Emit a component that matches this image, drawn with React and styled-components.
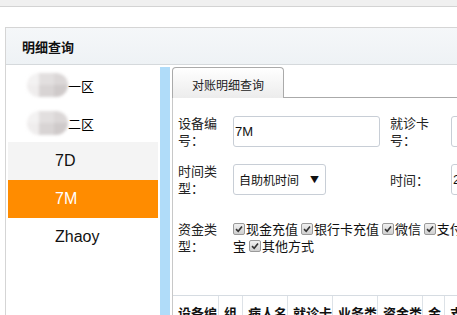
import React from 'react';
import styled, { createGlobalStyle } from 'styled-components';

const GlobalStyle = createGlobalStyle`
  html, body {
    margin: 0;
    padding: 0;
    background: #fff;
    overflow: hidden;
  }
  body {
    font-family: "Liberation Sans", "Noto Sans CJK SC", sans-serif;
    color: #222;
  }
`;

const TopStrip = styled.div`
  height: 6px;
  background: #f0f0f0;
  border-bottom: 1px solid #d3d3d3;
`;

const Panel = styled.div`
  margin: 20px 0 0 5px;
  width: 900px;
  border: 1px solid #d5d5d5;
`;

const PanelHeader = styled.div`
  height: 36px;
  line-height: 37px;
  padding-left: 16px;
  background: linear-gradient(#f5f7f9, #eef2f5);
  border-bottom: 1px solid #d5d9dc;
  font-family: "Noto Sans CJK SC", sans-serif;
  font-size: 13px;
  font-weight: bold;
  color: #111;
`;

const Body = styled.div`
  display: flex;
  align-items: stretch;
  height: 300px;
`;

const Sidebar = styled.div`
  width: 150px;
  padding: 1px 0 0 2px;
`;

const Item = styled.div`
  height: 38px;
  display: flex;
  align-items: center;
  padding-left: ${({ indent }) => indent}px;
  font-size: 16px;
  color: ${({ active }) => (active ? '#fff' : '#111')};
  background: ${({ active, hover }) => (active ? '#ff8c00' : hover ? '#f4f4f4' : 'transparent')};
`;

const Blob = styled.span`
  display: inline-block;
  width: 41px;
  height: 24px;
  border-radius: 12px;
  background:
    linear-gradient(180deg, rgba(255, 255, 255, 0.25) 0 50%, rgba(0, 0, 0, 0) 50%),
    linear-gradient(90deg, #efeded 0 30%, #d8d4d4 30% 65%, #cfcaca 65% 100%);
  filter: blur(1.5px);
`;

const ZoneName = styled.span`
  font-family: "Noto Sans CJK SC", sans-serif;
  font-size: 13px;
  color: #000;
`;

const BlueBar = styled.div`
  width: 10px;
  margin: 2px 0 0 2px;
  background: #b0dcf9;
`;

const Content = styled.div`
  flex: 1;
  margin: 2px 0 0 2px;
  display: flex;
  flex-direction: column;
`;

const TabBar = styled.div`
  display: flex;
  height: 31px;
`;

const Tab = styled.div`
  width: 110px;
  height: 30px;
  border: 1px solid #aaa;
  border-bottom: none;
  border-radius: 4px 4px 0 0;
  background: linear-gradient(#ffffff, #ececec);
  font-family: "Noto Sans CJK SC", sans-serif;
  font-size: 12px;
  line-height: 33px;
  text-align: center;
  color: #222;
`;

const TabRest = styled.div`
  flex: 1;
  border-bottom: 1px solid #aaa;
`;

const Pane = styled.div`
  flex: 1;
  border-left: 1px solid #c8c8c8;
  padding: 16px 0 0 5px;
`;

const FormGrid = styled.div`
  display: grid;
  grid-template-columns: 55px 157px 61px 200px;
  row-gap: 14px;
  align-items: center;
`;

const Label = styled.div`
  padding-right: ${({ wide }) => (wide ? 16 : 10)}px;
  font-family: "Noto Sans CJK SC", sans-serif;
  font-size: 13px;
  line-height: 17px;
  color: #222;
`;

const Input = styled.div`
  box-sizing: border-box;
  width: ${({ w }) => w}px;
  height: 31px;
  border: 1px solid #c8ced6;
  border-radius: 3px;
  padding-left: 1px;
  font-size: 13px;
  line-height: 29px;
  color: #111;
  white-space: nowrap;
  overflow: hidden;
`;

const Select = styled.div`
  box-sizing: border-box;
  width: 93px;
  height: 31px;
  border: 1px solid #c8ced6;
  border-radius: 3px;
  padding: 0 6px 0 5px;
  display: flex;
  align-items: center;
  justify-content: space-between;
  font-family: "Noto Sans CJK SC", sans-serif;
  font-size: 12px;
  color: #111;
`;

const Arrow = styled.span`
  font-size: 9px;
  color: #111;
`;

const CheckGroup = styled.div`
  grid-column: 2 / 5;
  width: 240px;
  margin-top: 10px;
  font-family: "Noto Sans CJK SC", sans-serif;
  font-size: 13px;
  line-height: 17px;
  color: #111;
`;

const FundLabel = styled(Label)`
  margin-top: 10px;
`;

const Box = styled.span`
  display: inline-block;
  box-sizing: border-box;
  width: 12px;
  height: 12px;
  margin-right: 1px;
  vertical-align: -1px;
  border: 1px solid #9a9a9a;
  border-radius: 2px;
  background: linear-gradient(#f0f0f0, #d0d0d0);
  position: relative;
  svg {
    position: absolute;
    left: 1px;
    top: 1px;
  }
`;

const Check = () => (
  <Box>
    <svg width="8" height="8" viewBox="0 0 8 8">
      <path d="M1 4.2 L3.2 6.3 L7 1.5" fill="none" stroke="#333" strokeWidth="1.6" />
    </svg>
  </Box>
);

const Table = styled.div`
  margin-top: 41px;
  margin-left: -5px;
  display: flex;
  border-top: 1px solid #d6dce2;
`;

const Cell = styled.div`
  box-sizing: border-box;
  width: ${({ w }) => w}px;
  height: 40px;
  padding: 8px 0 0 5px;
  border-left: ${({ first }) => (first ? 'none' : '1px solid #dde2e7')};
  overflow: hidden;
  font-family: "Noto Sans CJK SC", sans-serif;
  font-size: 13px;
  font-weight: bold;
  line-height: 17px;
  color: #111;
`;

const zones = [
  { key: 'z1', zone: '一区', indent: 19 },
  { key: 'z2', zone: '二区', indent: 19 },
  { key: '7D', text: '7D', indent: 47, hover: true },
  { key: '7M', text: '7M', indent: 47, active: true },
  { key: 'zh', text: 'Zhaoy', indent: 47 },
];

const columns = [
  { t: '设备编号', w: 45 },
  { t: '组号', w: 24 },
  { t: '病人名称', w: 45 },
  { t: '就诊卡号', w: 45 },
  { t: '业务类型', w: 45 },
  { t: '资金类型', w: 45 },
  { t: '金额', w: 22 },
  { t: '支付时间', w: 80 },
];

const funds = ['现金充值', '银行卡充值', '微信', '支付宝', '其他方式'];

export default function App() {
  return (
    <>
      <GlobalStyle />
      <TopStrip />
      <Panel>
        <PanelHeader>明细查询</PanelHeader>
        <Body>
          <Sidebar>
            {zones.map((z) => (
              <Item key={z.key} indent={z.indent} active={z.active} hover={z.hover}>
                {z.zone ? (
                  <>
                    <Blob />
                    <ZoneName>{z.zone}</ZoneName>
                  </>
                ) : (
                  z.text
                )}
              </Item>
            ))}
          </Sidebar>
          <BlueBar />
          <Content>
            <TabBar>
              <Tab>对账明细查询</Tab>
              <TabRest />
            </TabBar>
            <Pane>
              <FormGrid>
                <Label>设备编号：</Label>
                <Input w={147}>7M</Input>
                <Label wide>就诊卡号：</Label>
                <Input w={147} />
                <Label>时间类型：</Label>
                <Select>
                  <span>自助机时间</span>
                  <Arrow>▼</Arrow>
                </Select>
                <Label wide>时间：</Label>
                <Input w={147}>2018-01-01</Input>
                <FundLabel>资金类型：</FundLabel>
                <CheckGroup>
                  {funds.map((f) => (
                    <React.Fragment key={f}>
                      <Check />
                      {f}{' '}
                    </React.Fragment>
                  ))}
                </CheckGroup>
              </FormGrid>
              <Table>
                {columns.map((c, i) => (
                  <Cell key={c.t} w={c.w} first={i === 0}>
                    {c.t}
                  </Cell>
                ))}
              </Table>
            </Pane>
          </Content>
        </Body>
      </Panel>
    </>
  );
}
